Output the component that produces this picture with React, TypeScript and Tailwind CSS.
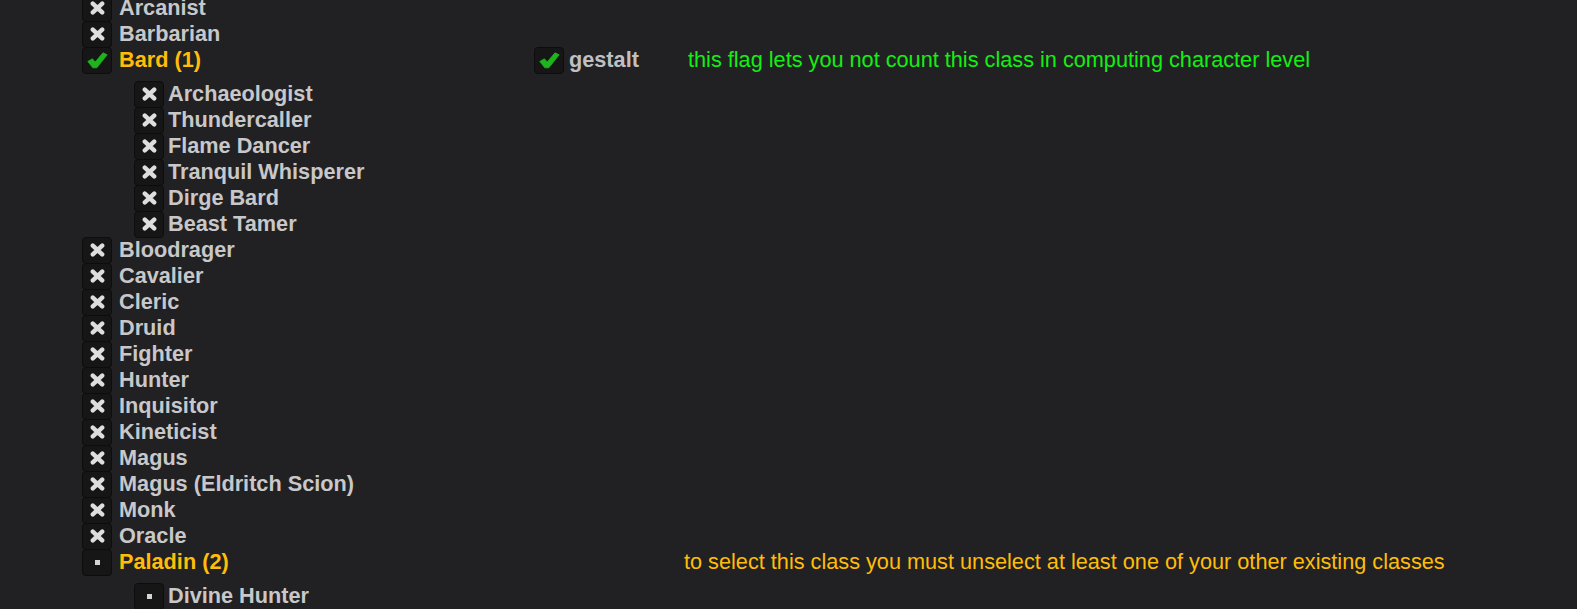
type Mark = 'off' | 'on' | 'blocked';

interface ClassRow {
  name: string;
  mark: Mark;
  subs?: string[];
  gestalt?: boolean;
  note?: string;
}

const classes: ClassRow[] = [
  { name: 'Arcanist', mark: 'off' },
  { name: 'Barbarian', mark: 'off' },
  {
    name: 'Bard (1)',
    mark: 'on',
    gestalt: true,
    subs: ['Archaeologist', 'Thundercaller', 'Flame Dancer', 'Tranquil Whisperer', 'Dirge Bard', 'Beast Tamer'],
  },
  { name: 'Bloodrager', mark: 'off' },
  { name: 'Cavalier', mark: 'off' },
  { name: 'Cleric', mark: 'off' },
  { name: 'Druid', mark: 'off' },
  { name: 'Fighter', mark: 'off' },
  { name: 'Hunter', mark: 'off' },
  { name: 'Inquisitor', mark: 'off' },
  { name: 'Kineticist', mark: 'off' },
  { name: 'Magus', mark: 'off' },
  { name: 'Magus (Eldritch Scion)', mark: 'off' },
  { name: 'Monk', mark: 'off' },
  { name: 'Oracle', mark: 'off' },
  {
    name: 'Paladin (2)',
    mark: 'blocked',
    note: 'to select this class you must unselect at least one of your other existing classes',
    subs: ['Divine Hunter', 'Hospitaler', 'Empyreal Knight'],
  },
];

function MarkIcon({ mark }: { mark: Mark }) {
  if (mark === 'on') {
    return (
      <svg width="21" height="17" viewBox="0 0 21 17">
        <path
          d="M0.8 9.4 L5.4 6.8 L8.2 10 L16 0.8 L20.2 2.8 L9.8 15.8 L5.8 15.8 Z"
          fill="#1db41d"
          stroke="#1db41d"
          strokeWidth="0.8"
          strokeLinejoin="round"
        />
      </svg>
    );
  }
  if (mark === 'blocked') {
    return <span className="block h-[5px] w-[5px] bg-[#d4d4d4]" />;
  }
  return (
    <svg width="15" height="14" viewBox="0 0 15 14">
      <path d="M2.8 2.6 L12.2 11.4 M12.2 2.6 L2.8 11.4" stroke="#dedede" strokeWidth="4.4" strokeLinecap="round" />
    </svg>
  );
}

function Box({ mark }: { mark: Mark }) {
  return (
    <span className="flex h-[27px] w-[30px] shrink-0 items-center justify-center rounded-[4px] border border-[#0d0d0e] bg-[#161617]">
      <MarkIcon mark={mark} />
    </span>
  );
}

function Row({ row }: { row: ClassRow }) {
  const highlighted = row.mark !== 'off';
  return (
    <div className={row.subs ? 'mb-[8px]' : ''}>
      <div className="flex h-[26px] items-center">
        <div className="flex w-[452px] items-center gap-[7px]">
          <Box mark={row.mark} />
          <span className={highlighted ? 'text-[#ffbd0a]' : 'text-[#c8c8ca]'}>{row.name}</span>
        </div>
        {row.gestalt && (
          <>
            <div className="flex w-[154px] items-center gap-[5px]">
              <Box mark="on" />
              <span className="text-[#c0c0c2]">gestalt</span>
            </div>
            <span className="font-normal text-[#14ee14]">
              this flag lets you not count this class in computing character level
            </span>
          </>
        )}
        {row.note && <span className="ml-[150px] font-normal text-[#ffbd0a]">{row.note}</span>}
      </div>
    </div>
  );
}

export default function App() {
  return (
    <div className="h-[609px] overflow-hidden bg-[#212123] font-['Liberation_Sans',Arial,sans-serif] text-[21.7px] font-bold leading-none">
      <div className="mt-[-5px] pl-[82px]">
        {classes.map((row) => (
          <div key={row.name}>
            <Row row={row} />
            {row.subs && (
              <div className="pl-[52px]">
                {row.subs.map((sub) => (
                  <div key={sub} className="flex h-[26px] items-center gap-[4px]">
                    <Box mark={row.mark === 'blocked' ? 'blocked' : 'off'} />
                    <span className="text-[#c8c8ca]">{sub}</span>
                  </div>
                ))}
              </div>
            )}
          </div>
        ))}
      </div>
    </div>
  );
}
